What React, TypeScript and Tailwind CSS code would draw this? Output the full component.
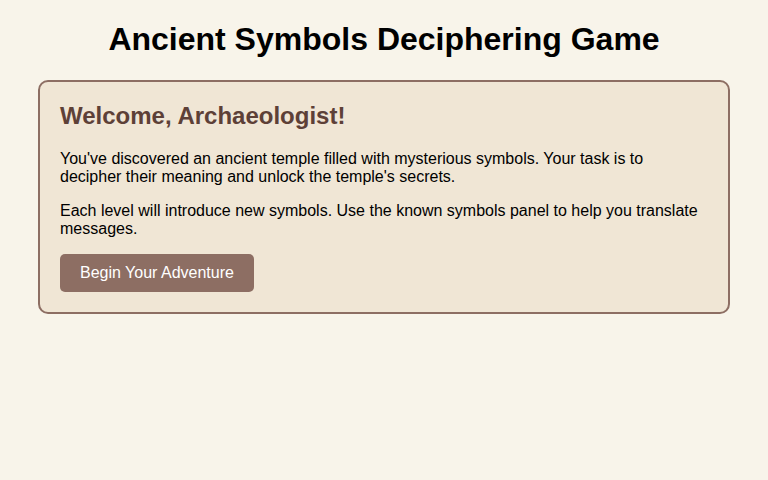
import React from "react";

function App() {
  return (
    <div className="min-h-[480px] bg-[#f8f4ea] px-[38px] font-['Liberation_Sans',Arial,sans-serif] text-black">
      <h1 className="pt-[21px] pb-[22px] text-center text-[32px] font-bold leading-[37px]">
        Ancient Symbols Deciphering Game
      </h1>
      <div className="rounded-[10px] border-2 border-[#8d6e63] bg-[#f0e6d5] p-5">
        <h2 className="text-2xl font-bold leading-[28px] text-[#5d4037]">
          Welcome, Archaeologist!
        </h2>
        <p className="mt-5 text-base leading-[18px]">
          You've discovered an ancient temple filled with mysterious symbols. Your task is to
          decipher their meaning and unlock the temple's secrets.
        </p>
        <p className="mt-4 text-base leading-[18px]">
          Each level will introduce new symbols. Use the known symbols panel to help you translate
          messages.
        </p>
        <button className="mt-4 rounded-[5px] bg-[#8d6e63] px-5 py-[10px] text-base leading-[18px] text-white">
          Begin Your Adventure
        </button>
      </div>
    </div>
  );
}

export default App;
